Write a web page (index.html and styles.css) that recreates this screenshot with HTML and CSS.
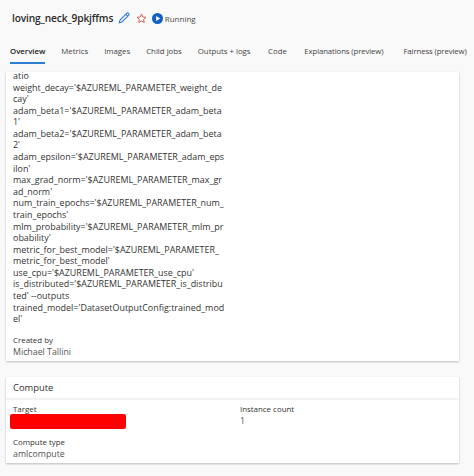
FILE: index.html
```html
<!DOCTYPE html>
<html lang="en">
<head>
<meta charset="utf-8">
<title>loving_neck_9pkjffms</title>
<link rel="stylesheet" href="styles.css">
</head>
<body>
<header class="head">
  <h1 class="title">loving_neck_9pkjffms</h1>
  <svg class="pencil" viewBox="0 0 16 16" width="12" height="12"><path d="M11.5 1.8a1.8 1.8 0 0 1 2.6 2.6L5.2 13.3 1.6 14.4l1.1-3.6z M10.3 3l2.6 2.6" fill="none" stroke="#2f78d0" stroke-width="1.4"/></svg>
  <svg class="star" viewBox="0 0 16 16" width="11" height="11"><path d="M8 1.6l1.9 4.2 4.6.5-3.4 3.1.9 4.5-4-2.3-4 2.3.9-4.5-3.4-3.1 4.6-.5z" fill="none" stroke="#c8554a" stroke-width="1.3"/></svg>
  <svg class="run" viewBox="0 0 12 12" width="11" height="11"><circle cx="6" cy="6" r="6" fill="#0f62c4"/><path d="M4.5 3.2v5.6L9 6z" fill="#fff"/></svg>
  <span class="status">Running</span>
</header>
<nav class="tabs">
  <span class="tab active">Overview</span>
  <span class="tab">Metrics</span>
  <span class="tab">Images</span>
  <span class="tab">Child jobs</span>
  <span class="tab">Outputs + logs</span>
  <span class="tab tab-code">Code</span>
  <span class="tab tab-explain">Explanations (preview)</span>
  <span class="tab tab-fair">Fairness (preview)</span>
</nav>
<main class="content">
  <section class="card top">
    <pre class="code">atio
weight_decay='$AZUREML_PARAMETER_weight_de
cay'
adam_beta1='$AZUREML_PARAMETER_adam_beta
1'
adam_beta2='$AZUREML_PARAMETER_adam_beta
2'
adam_epsilon='$AZUREML_PARAMETER_adam_eps
ilon'
max_grad_norm='$AZUREML_PARAMETER_max_gr
ad_norm'
num_train_epochs='$AZUREML_PARAMETER_num_
train_epochs'
mlm_probability='$AZUREML_PARAMETER_mlm_pr
obability'
metric_for_best_model='$AZUREML_PARAMETER_
metric_for_best_model'
use_cpu='$AZUREML_PARAMETER_use_cpu'
is_distributed='$AZUREML_PARAMETER_is_distribu
ted' --outputs
trained_model='DatasetOutputConfig:trained_mod
el'</pre>
    <div class="label created">Created by</div>
    <div class="value">Michael Tallini</div>
  </section>
  <section class="card compute">
    <h2 class="card-title">Compute</h2>
    <div class="grid">
      <div class="cell">
        <div class="label">Target</div>
        <div class="redact"></div>
        <div class="label type">Compute type</div>
        <div class="value">amlcompute</div>
      </div>
      <div class="cell">
        <div class="label">Instance count</div>
        <div class="value">1</div>
      </div>
    </div>
  </section>
</main>
</body>
</html>
```
FILE: styles.css
```css
* { box-sizing: border-box; }
html, body { margin: 0; padding: 0; }
body {
  width: 474px;
  height: 476px;
  overflow: hidden;
  background: #f9f9f9;
  font-family: "Open Sans", "Noto Sans", "Liberation Sans", sans-serif;
  color: #333;
}
.head {
  display: flex;
  align-items: center;
  height: 36px;
  padding-left: 12px;
}
.title { margin: 0; font-size: 10.2px; font-weight: 600; letter-spacing: -.15px; color: #2b2b2b; line-height: 36px; }
.pencil { margin-left: 5px; }
.star { margin-left: 6px; }
.run { margin-left: 5px; }
.status { margin-left: 1.5px; font-size: 8px; color: #4a4a4a; }
.tabs {
  display: flex;
  gap: 16px;
  height: 36px;
  padding: 8px 0 0 10px;
  font-size: 7.8px;
  color: #444;
}
.tab { height: 20px; line-height: 15px; white-space: nowrap; }
.tab.active { color: #222; font-weight: 600; border-bottom: 2px solid #2f7fd0; }
.tab-code { margin-left: 1.5px; }
.tab-explain { margin-left: 1.5px; letter-spacing: -.12px; }
.tab-fair { margin-left: 4px; letter-spacing: -.12px; }
.content { display: flex; flex-direction: column; gap: 16px; padding: 0 15px 0 6px; }
.card { background: #fff; box-shadow: 0 1px 2px rgba(0,0,0,.25); }
.top { height: 289px; padding: 0 7px; overflow: hidden; }
.code {
  margin: -2px 0 0;
  font-family: inherit;
  font-size: 8.95px;
  line-height: 11.58px;
  color: #333;
  white-space: pre;
}
.label { font-size: 7.9px; line-height: 12px; color: #333; }
.value { font-size: 8.8px; line-height: 12px; color: #555; }
.created { margin-top: 9px; }
.compute { height: 86px; }
.card-title {
  margin: 0;
  height: 23px;
  padding-left: 7px;
  font-size: 9.4px;
  font-weight: 400;
  line-height: 21px;
  color: #333;
  border-bottom: 2px solid #f2f2f2;
}
.grid { display: grid; grid-template-columns: 227px 1fr; padding: 3px 7px 0; }
.redact { height: 15px; width: 116px; margin: -1px 0 0 -3px; border-radius: 2px; background: #fe0000; }
.type { margin-top: 7px; }
```
